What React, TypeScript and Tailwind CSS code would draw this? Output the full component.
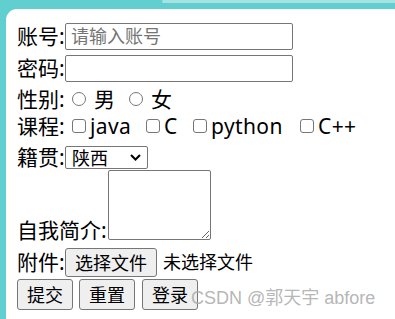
import React from "react";

const font = "font-['Noto_Sans','Noto_Sans_CJK_SC',sans-serif]";

function Radio({ label, name }: { label: string; name: string }) {
  return (
    <label className="flex items-center w-[57px] shrink-0">
      <input
        type="radio"
        name={name}
        className="appearance-none w-[14px] h-[14px] rounded-full border border-[#767676] bg-white shrink-0"
      />
      <span className="ml-[8px] text-[21px] leading-[26px]">{label}</span>
    </label>
  );
}

function Check({ label, width }: { label: string; width: string }) {
  return (
    <label className={`flex items-center shrink-0 ${width}`}>
      <input
        type="checkbox"
        className="appearance-none w-[14px] h-[14px] rounded-[3px] border border-[#767676] bg-white shrink-0"
      />
      <span className="ml-[4px] text-[21px] leading-[26px] tracking-[0.4px]">{label}</span>
    </label>
  );
}

function Btn({ children, className = "" }: { children: React.ReactNode; className?: string }) {
  return (
    <button
      type="button"
      className={`bg-[#efefef] border border-[#767676] rounded-[3px] text-[18px] leading-none text-black flex items-center justify-center shrink-0 ${className}`}
    >
      {children}
    </button>
  );
}

export default function App() {
  return (
    <div className={`relative min-h-[319px] bg-[#61cfcf] overflow-hidden ${font} text-black`}>
      {/* light strip along the top edge */}
      <div className="absolute left-[162px] right-0 top-0 h-[3px] rounded-l-full bg-[#a6e4e4]" />

      <div className="ml-[6px] mt-[9px] min-h-[310px] bg-white rounded-tl-[11px] pl-[11px] pt-[14px]">
        <form className="flex flex-col">
          <div className="flex items-center h-[27px]">
            <span className="w-[48px] shrink-0 text-[21px] leading-[27px]">账号:</span>
            <input
              type="text"
              placeholder="请输入账号"
              className="w-[228px] h-[27px] border border-[#767676] rounded-[2px] px-[5px] text-[18px] outline-none placeholder:text-[#757575]"
            />
          </div>

          <div className="flex items-center h-[27px] mt-[5px]">
            <span className="w-[48px] shrink-0 text-[21px] leading-[27px]">密码:</span>
            <input
              type="password"
              className="w-[228px] h-[27px] border border-[#767676] rounded-[2px] px-[5px] text-[18px] outline-none"
            />
          </div>

          <div className="flex items-center h-[26px] mt-[4px]">
            <span className="w-[55px] shrink-0 text-[21px] leading-[26px]">性别:</span>
            <Radio name="sex" label="男" />
            <Radio name="sex" label="女" />
          </div>

          <div className="flex items-center h-[26px] mt-[1px]">
            <span className="w-[55px] shrink-0 text-[21px] leading-[26px]">课程:</span>
            <Check label="java" width="w-[74px]" />
            <Check label="C" width="w-[47px]" />
            <Check label="python" width="w-[107px]" />
            <Check label="C++" width="w-[70px]" />
          </div>

          <div className="flex items-center h-[23px] mt-[7px]">
            <span className="w-[48px] shrink-0 text-[21px] leading-[23px]">籍贯:</span>
            <div className="relative w-[83px] h-[23px]">
              <select className="appearance-none w-full h-full border border-[#767676] rounded-[2px] pl-[6px] text-[18px] leading-none bg-white outline-none">
                <option>陕西</option>
                <option>北京</option>
                <option>上海</option>
              </select>
              <svg
                className="absolute right-[7px] top-[8px] pointer-events-none"
                width="11"
                height="7"
                viewBox="0 0 11 7"
              >
                <path d="M1 1l4.5 4.5L10 1" fill="none" stroke="#000" strokeWidth="2" />
              </svg>
            </div>
          </div>

          <div className="flex items-end mt-[1px]">
            <span className="w-[91px] shrink-0 text-[21px] leading-[21px] mb-[-1px]">自我简介:</span>
            <textarea className="w-[103px] h-[70px] border border-[#767676] rounded-[2px] outline-none" />
          </div>

          <div className="flex items-center h-[29px] mt-[8px]">
            <span className="w-[48px] shrink-0 text-[21px] leading-[29px]">附件:</span>
            <Btn className="w-[92px] h-[29px]">选择文件</Btn>
            <span className="ml-[6px] text-[18px] leading-[29px]">未选择文件</span>
          </div>

          <div className="flex items-center h-[31px] mt-[2px] gap-[6px]">
            <Btn className="w-[56px] h-[31px]">提交</Btn>
            <Btn className="w-[56px] h-[31px]">重置</Btn>
            <Btn className="w-[56px] h-[31px] ml-[1px]">登录</Btn>
          </div>
        </form>
      </div>

      {/* watermark */}
      <div className="absolute left-[191px] top-[288px] text-[18px] leading-[20px] text-[#adadad]/90 font-['Liberation_Sans','Noto_Sans_CJK_SC',sans-serif] whitespace-nowrap pointer-events-none">
        CSDN @郭天宇 abfore
      </div>
    </div>
  );
}
